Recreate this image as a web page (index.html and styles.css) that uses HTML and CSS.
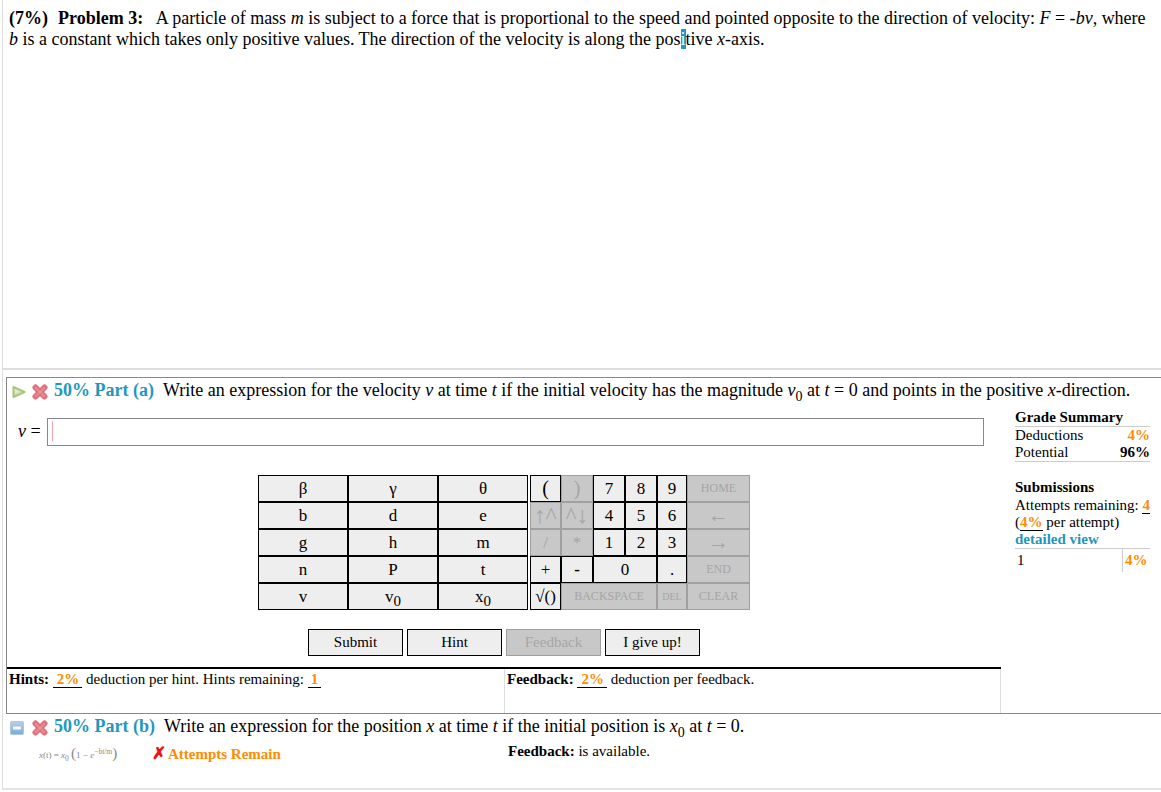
FILE: index.html
```html
<!DOCTYPE html>
<html lang="en">
<head>
<meta charset="utf-8">
<title>Problem 3</title>
<link rel="stylesheet" href="styles.css">
</head>
<body>
<div class="frame">
  <section class="problem">
    <p><b><span class="lead">(7%)</span>&nbsp; Problem 3:</b>&nbsp;&nbsp; A particle of mass <i>m</i> is subject to a force that is proportional to the speed and pointed opposite to the direction of velocity: <i>F</i> = -<i>bv</i>, where<br><i>b</i> is a constant which takes only positive values. The direction of the velocity is along the pos<span class="sel">i</span>tive <i>x</i>-axis.</p>
  </section>

  <section class="part-a">
    <header class="part-head">
      <svg class="ico-play" viewBox="0 0 14 14"><defs><linearGradient id="gp" x1="0" y1="0" x2="0" y2="1"><stop offset="0" stop-color="#eef4dc"/><stop offset="1" stop-color="#c9dca6"/></linearGradient></defs><path d="M1.5 2 L12.5 7 L1.5 12 Z" fill="url(#gp)" stroke="#a9c57c" stroke-width="2" stroke-linejoin="round"/></svg>
      <svg class="ico-x" viewBox="0 0 16 16"><path d="M3.5 3.5 L12.5 12.5 M12.5 3.5 L3.5 12.5" stroke="#e0707a" stroke-width="6" stroke-linecap="round"/><path d="M3.5 3.5 L12.5 12.5 M12.5 3.5 L3.5 12.5" stroke="#ec9aa0" stroke-width="1.2" stroke-linecap="round"/></svg>
      <b class="pct">50% Part (a)</b>
      <span class="ptext">Write an expression for the velocity <i>v</i> at time <i>t</i> if the initial velocity has the magnitude <i>v</i><sub>0</sub> at <i>t</i> = 0 and points in the positive <i>x</i>-direction.</span>
    </header>
    <div class="part-body">
      <div class="main">
        <div class="answer">
          <span class="var"><i>v</i> =</span>
          <div class="input"><span class="caret"></span></div>
        </div>
        <div class="keypad">
          <div class="pad-vars">
            <button>β</button><button>γ</button><button>θ</button>
            <button>b</button><button>d</button><button>e</button>
            <button>g</button><button>h</button><button>m</button>
            <button>n</button><button>P</button><button>t</button>
            <button>v</button><button>v<sub>0</sub></button><button>x<sub>0</sub></button>
          </div>
          <div class="pad-ops">
            <button class="big">(</button><button class="off big">)</button><button>7</button><button>8</button><button>9</button><button class="off small">HOME</button>
            <button class="off arrow">↑^</button><button class="off arrow">^↓</button><button>4</button><button>5</button><button>6</button><button class="off side-arrow">←</button>
            <button class="off">/</button><button class="off">*</button><button>1</button><button>2</button><button>3</button><button class="off side-arrow">→</button>
            <button>+</button><button class="strong">-</button><button class="span2">0</button><button>.</button><button class="off small">END</button>
            <button class="root">√()</button><button class="off span3 small">BACKSPACE</button><button class="off tiny">DEL</button><button class="off small">CLEAR</button>
          </div>
        </div>
        <div class="actions">
          <button>Submit</button><button>Hint</button><button class="off">Feedback</button><button>I give up!</button>
        </div>
        <div class="hints">
          <div class="hint-cell"><b>Hints:</b> <b class="mark">2%</b> deduction per hint. Hints remaining: <b class="mark tight">1</b></div>
          <div class="feedback-cell"><b>Feedback:</b> <b class="mark">2%</b> deduction per feedback.</div>
        </div>
      </div>
      <aside class="side">
        <h4>Grade Summary</h4>
        <div class="row top"><span>Deductions</span><b class="orange">4%</b></div>
        <div class="row bottom"><span>Potential</span><b>96%</b></div>
        <h4 class="subs">Submissions</h4>
        <div class="att">Attempts remaining: <b class="mark-s">4</b><br>(<b class="mark-s">4%</b> per attempt)</div>
        <div class="detail">detailed view</div>
        <div class="tries"><span>1</span><b class="orange">4%</b></div>
      </aside>
    </div>
  </section>

  <section class="part-b">
    <header class="part-head b">
      <svg class="ico-min" viewBox="0 0 14 14"><defs><linearGradient id="gm" x1="0" y1="0" x2="0" y2="1"><stop offset="0" stop-color="#b6d0ea"/><stop offset="1" stop-color="#7fa9d4"/></linearGradient></defs><rect x="0.5" y="0.5" width="13" height="13" rx="1" fill="url(#gm)" stroke="#a9c8e6"/><rect x="3" y="5.5" width="8" height="3" fill="#f4f8fc"/></svg>
      <svg class="ico-x" viewBox="0 0 16 16"><path d="M3.5 3.5 L12.5 12.5 M12.5 3.5 L3.5 12.5" stroke="#e0707a" stroke-width="6" stroke-linecap="round"/><path d="M3.5 3.5 L12.5 12.5 M12.5 3.5 L3.5 12.5" stroke="#ec9aa0" stroke-width="1.2" stroke-linecap="round"/></svg>
      <b class="pct">50% Part (b)</b>
      <span class="ptext">Write an expression for the position <i>x</i> at time <i>t</i> if the initial position is <i>x</i><sub>0</sub> at <i>t</i> = 0.</span>
    </header>
    <div class="b-row">
      <span class="formula"><i>x</i>(t) = <i>x</i><sub>0</sub> <span class="paren">(</span>1 − <i>e</i><sup>−bt/m</sup><span class="paren">)</span></span>
      <b class="remain"><span class="cross">✗</span> Attempts Remain</b>
      <span class="b-feedback"><b>Feedback:</b> is available.</span>
    </div>
  </section>
</div>
</body>
</html>
```
FILE: styles.css
```css
* { box-sizing: border-box; }
html, body { margin: 0; height: 792px; overflow: hidden; background: #fff; }
body { font-family: "Liberation Serif", "Times New Roman", serif; color: #000; font-size: 15px; }
button { font-family: inherit; margin: 0; padding: 0; border: 1px solid #000; background: #eee; color: #000; border-radius: 0; }

.frame { margin-left: 2px; width: 1159px; height: 790px; border-left: 1px solid #ddd; border-bottom: 2px solid #e4e4e4; }

.problem { height: 370px; border-bottom: 2px solid #ddd; padding: 8px 0 0 6px; font-size: 18px; line-height: 21px; }
.problem p { margin: 0; white-space: nowrap; }
.lead { margin-right: 1px; }
.sel { background: #1a9cc4; color: #fff; }

.part-a { margin: 7px 0 0 3px; width: 1155px; height: 337px; border: 1px solid #888; border-right: 0; }
.part-head { display: flex; align-items: center; height: 30px; white-space: nowrap; padding: 0 0 6px 5px; font-size: 18px; }
.part-head svg { margin-top: 3px; }
.ico-play { width: 14px; height: 14px; margin-right: 6px; }
.ico-x { width: 16px; height: 16px; margin-right: 6px; }
.ico-min { width: 14px; height: 14px; margin: 0 8px 0 -1px; }
.pct { color: #1f97bd; margin-right: 9px; }
.ptext sub { font-size: 14px; line-height: 0; }

.part-body { display: flex; }
.main { width: 994px; padding-top: 10px; }
.answer { display: flex; height: 28px; }
.var { width: 40px; padding: 3px 0 0 11px; font-size: 18px; white-space: nowrap; }
.input { width: 937px; border: 1px solid #888; padding: 2px 4px; }
.caret { display: block; width: 1px; height: 20px; background: #f2a9ae; }

.keypad { display: flex; margin: 29px 0 0 251px; }
.pad-vars { display: grid; grid-template-columns: repeat(3, 90px); grid-auto-rows: 27px; }
.pad-vars button { font-size: 17px; }
.pad-ops { display: grid; margin-left: 2px; grid-template-columns: 31px 32px 32px 32px 30px 63px; grid-auto-rows: 27px; }
.pad-ops button { font-size: 17px; }
.keypad sub { font-size: 15px; line-height: 0; }
.pad-ops button.off { background: #c8c8c8; border-color: #a0a0a0; color: #a5a5a5; }
.pad-ops button.big { font-size: 20px; }
.pad-ops button.arrow { font-size: 23px; white-space: nowrap; overflow: hidden; }
.pad-ops button.side-arrow { font-size: 21px; }
.pad-ops button.small { font-size: 12px; }
.pad-ops button.tiny { font-size: 10px; }
.pad-ops button.strong { font-weight: bold; }
.pad-ops button.root { font-size: 17px; white-space: nowrap; }
.span2 { grid-column: span 2; }
.span3 { grid-column: span 3; }

.actions { display: flex; gap: 4px; margin: 19px 0 0 301px; }
.actions button { width: 95px; height: 27px; font-size: 15px; }
.actions button.off { background: #c8c8c8; border-color: #a0a0a0; color: #a5a5a5; }

.hints { display: flex; margin-top: 11px; height: 46px; border-top: 2px solid #000; }
.hint-cell { width: 497px; padding: 2px 0 0 2px; }
.feedback-cell { width: 497px; padding: 2px 0 0 2px; border-left: 1px solid #ddd; border-right: 1px solid #ddd; }
.mark { display: inline-block; color: #ff8c00; padding: 0 3px 0 4px; border-bottom: 1px solid #000; line-height: 16px; }
.mark.tight { padding: 0 3px; }

.side { width: 135px; margin-left: 14px; line-height: 17px; padding-top: 1px; }
.side h4 { margin: 0; font-size: 15px; height: 18px; border-bottom: 1px solid #ccc; }
.row { display: flex; justify-content: space-between; }
.row.bottom { height: 18px; border-bottom: 1px solid #ccc; }
.orange { color: #ff8c00; }
.side h4.subs { margin-top: 17px; border-bottom: 0; height: 18px; }
.att { height: 34px; white-space: nowrap; }
.mark-s { color: #ff8c00; border-bottom: 1px solid #000; }
.detail { height: 18px; font-weight: bold; color: #1f97bd; border-bottom: 1px solid #ccc; }
.tries { display: flex; justify-content: space-between; height: 23px; padding: 3px 0 0 2px; }
.tries b { width: 28px; padding-left: 2px; margin-top: -3px; padding-top: 3px; border-left: 1px solid #ccc; }

.part-b { margin-left: 3px; }
.part-head.b { height: 25px; padding-bottom: 0; }
.part-head.b svg { margin-top: 2px; }
.b-row { display: flex; align-items: center; height: 32px; white-space: nowrap; }
.formula { width: 146px; padding-left: 33px; font-size: 9px; color: #888; }
.paren { font-size: 15px; line-height: 0; }
.remain { width: 356px; margin-top: -4px; color: #ff8c00; font-size: 15px; }
.cross { color: #f01010; font-size: 17px; margin-right: -1px; }
.b-feedback { margin-top: -8px; }
```
